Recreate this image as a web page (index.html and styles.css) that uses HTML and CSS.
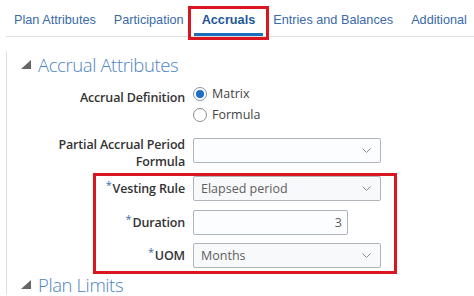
FILE: index.html
```html
<!DOCTYPE html>
<html lang="en">
<head>
    <meta charset="UTF-8">
    <meta name="viewport" content="width=device-width, initial-scale=1.0">
    <title>Accruals</title>
    <link rel="stylesheet" href="styles.css">
</head>
<body>
    <div class="tabs">
        <a class="tab">Plan Attributes</a>
        <a class="tab">Participation</a>
        <a class="tab active">Accruals</a>
        <a class="tab">Entries and Balances</a>
        <a class="tab">Additional</a>
    </div>
    <div class="panel">
        <h2 class="section-title">
            <svg class="disclosure" width="10" height="9" viewBox="0 0 10 9"><polygon points="10,0 10,9 0,9"/></svg>
            Accrual Attributes
        </h2>
        <div class="row row-radio">
            <div class="field-label">Accrual Definition</div>
            <div class="radios">
                <div class="radio"><span class="dot checked"></span>Matrix</div>
                <div class="radio"><span class="dot"></span>Formula</div>
            </div>
        </div>
        <div class="row row-top">
            <div class="field-label">Partial Accrual Period<br>Formula</div>
            <div class="select">
                <span class="value"></span>
                <svg class="chevron" width="9" height="5" viewBox="0 0 9 5"><polyline points="0.5,0.5 4.5,4.5 8.5,0.5"/></svg>
            </div>
        </div>
        <div class="highlight">
            <div class="row">
                <div class="field-label"><span class="req">*</span>Vesting Rule</div>
                <div class="select filled">
                    <span class="value">Elapsed period</span>
                    <svg class="chevron" width="9" height="5" viewBox="0 0 9 5"><polyline points="0.5,0.5 4.5,4.5 8.5,0.5"/></svg>
                </div>
            </div>
            <div class="row">
                <div class="field-label"><span class="req">*</span>Duration</div>
                <div class="input number">3</div>
            </div>
            <div class="row">
                <div class="field-label"><span class="req">*</span>UOM</div>
                <div class="select filled">
                    <span class="value">Months</span>
                    <svg class="chevron" width="9" height="5" viewBox="0 0 9 5"><polyline points="0.5,0.5 4.5,4.5 8.5,0.5"/></svg>
                </div>
            </div>
        </div>
        <h2 class="section-title last">
            <svg class="disclosure" width="10" height="9" viewBox="0 0 10 9"><polygon points="10,0 10,9 0,9"/></svg>
            Plan Limits
        </h2>
    </div>
</body>
</html>
```

FILE: styles.css
```css
body {
    margin: 0;
    background: #fff;
    font-family: "Open Sans", "Noto Sans", sans-serif;
    width: 474px;
    height: 296px;
    overflow: hidden;
}
.tabs {
    display: flex;
    gap: 2px;
    margin-left: 6px;
    height: 36px;
    border-bottom: 1px solid #dedede;
    white-space: nowrap;
    font-family: "Liberation Sans", Arial, sans-serif;
    font-size: 12.7px;
}
.tab {
    position: relative;
    padding: 7px 8px 0;
    line-height: 26px;
    border-bottom: 3px solid transparent;
    color: #3a6aa8;
}
.tab.active {
    font-weight: bold;
    color: #1f5796;
    border-bottom-color: #1c6dbe;
}
/* annotation box drawn over the active tab */
.tab.active::after {
    content: "";
    position: absolute;
    left: -6px;
    right: -6px;
    top: 6px;
    bottom: -7px;
    border: 3px solid #d9161f;
}
.panel {
    margin-left: 6px;
    border-left: 1px solid #e0e0e0;
}
.section-title {
    display: flex;
    align-items: center;
    margin: 14px 0 0;
    padding-left: 14px;
    height: 26px;
    font-size: 18.5px;
    letter-spacing: -0.4px;
    font-weight: 300;
    color: #4d84c4;
}
.section-title.last {
    margin-top: 0;
    height: 20px;
}
.disclosure {
    fill: #666;
    margin-right: 7px;
}
.row {
    display: flex;
    align-items: center;
    gap: 8px;
    margin-top: 8px;
}
.row-radio {
    align-items: flex-start;
    margin-top: 6px;
}
.row-top {
    align-items: flex-start;
    margin-top: 11px;
}
.field-label {
    flex: none;
    width: 178px;
    text-align: right;
    font-size: 12.5px;
    letter-spacing: -0.15px;
    font-weight: 600;
    color: #333;
    line-height: 25px;
}
.row-radio .field-label {
    line-height: 18px;
    padding-top: 6px;
}
.row-top .field-label {
    line-height: 17px;
}
.req {
    color: #3c6fa8;
    font-size: 11px;
    font-weight: normal;
    line-height: 0;
    vertical-align: 4px;
    margin-right: 1px;
}
.radios {
    display: flex;
    flex-direction: column;
}
.radio {
    display: flex;
    align-items: center;
    height: 21px;
    font-size: 12.5px;
    color: #444;
}
.dot {
    box-sizing: border-box;
    width: 14px;
    height: 14px;
    border: 1px solid #8c8c8c;
    border-radius: 50%;
    background: #fff;
    margin-right: 5px;
    display: flex;
    align-items: center;
    justify-content: center;
}
.dot.checked {
    border-color: #7f93aa;
}
.dot.checked::before {
    content: "";
    width: 8px;
    height: 8px;
    border-radius: 50%;
    background: #1b6ec2;
}
.select,
.input {
    box-sizing: border-box;
    display: flex;
    align-items: center;
    height: 25px;
    border: 1px solid #aeb4ba;
    border-radius: 2px;
    background: #fcfdfe;
    font-size: 12.5px;
    color: #5e5e5e;
}
.select {
    width: 188px;
    padding: 0 9px 0 7px;
}
.row-top .select {
    margin-top: 2px;
}
.select.filled {
    background: #f8f9fa;
}
.select .value {
    flex: 1;
}
.chevron {
    fill: none;
    stroke: #8a8a8a;
    stroke-width: 1;
}
.input {
    width: 155px;
    padding: 0 5px;
    justify-content: flex-end;
}
.highlight {
    margin: 3px 0 0 86px;
    width: 304px;
    box-sizing: border-box;
    border: 3px solid #d9161f;
    padding-bottom: 3px;
}
.highlight .row:first-child {
    margin-top: 0;
}
.highlight .row + .row {
    margin-top: 8.5px;
}
.highlight .field-label {
    width: 89px;
}
```
